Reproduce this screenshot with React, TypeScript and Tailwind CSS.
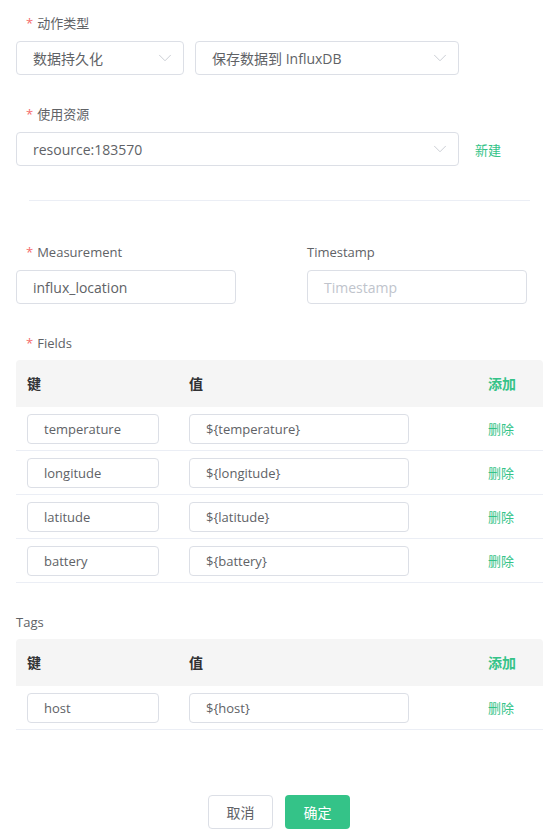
import { ChevronDown } from "lucide-react";

const FONT = { fontFamily: '"Open Sans", "Noto Sans CJK SC", sans-serif' };

const fields = [
  { key: "temperature", value: "${temperature}" },
  { key: "longitude", value: "${longitude}" },
  { key: "latitude", value: "${latitude}" },
  { key: "battery", value: "${battery}" },
];

const tags = [{ key: "host", value: "${host}" }];

function Label({ text, required }: { text: string; required?: boolean }) {
  return (
    <div className="text-[13px] leading-[20px] text-[#606266] pl-[10px]">
      {required && <span className="text-[#f56c6c] mr-[4px]">*</span>}
      {text}
    </div>
  );
}

function Select({ value, className }: { value: string; className: string }) {
  return (
    <div className={`h-[34px] border border-[#dcdfe6] rounded-[4px] flex items-center justify-between pl-[16px] pr-[7px] text-[14px] text-[#606266] ${className}`}>
      <span>{value}</span>
      <ChevronDown className="w-[22px] h-[22px] text-[#c0c4cc]" strokeWidth={0.9} />
    </div>
  );
}

function KvTable({ rows }: { rows: { key: string; value: string }[] }) {
  return (
    <div className="w-[527px]">
      <div className="grid grid-cols-[162px_299px_1fr] h-[47px] items-center bg-[#f5f5f5] rounded-t-[4px] text-[14px] font-bold">
        <div className="pl-[11px] text-[#303133]">键</div>
        <div className="pl-[11px] text-[#303133]">值</div>
        <div className="pl-[11px] text-[#34c388]">添加</div>
      </div>
      {rows.map((r) => (
        <div key={r.key} className="grid grid-cols-[162px_299px_1fr] h-[44px] items-center border-b border-[#ebeef5]">
          <div className="pl-[11px]">
            <div className="w-[132px] h-[30px] border border-[#dcdfe6] rounded-[4px] flex items-center pl-[16px] pt-[2px] text-[13px] text-[#606266]">{r.key}</div>
          </div>
          <div className="pl-[11px]">
            <div className="w-[220px] h-[30px] border border-[#dcdfe6] rounded-[4px] flex items-center pl-[16px] pt-[2px] text-[13px] text-[#606266]">{r.value}</div>
          </div>
          <div className="pl-[11px] pt-[2px] text-[13px] text-[#34c388]">删除</div>
        </div>
      ))}
    </div>
  );
}

export default function App() {
  return (
    <div className="w-[558px] h-[839px] bg-white pl-[16px] overflow-hidden" style={FONT}>
      {/* 动作类型 */}
      <div className="pt-[13px]">
        <Label text="动作类型" required />
        <div className="mt-[8px] flex gap-[11px]">
          <Select value="数据持久化" className="w-[168px]" />
          <Select value="保存数据到 InfluxDB" className="w-[264px]" />
        </div>
      </div>

      {/* 使用资源 */}
      <div className="mt-[29px]">
        <Label text="使用资源" required />
        <div className="mt-[8px] flex items-center">
          <Select value="resource:183570" className="w-[443px]" />
          <span className="ml-[16px] pt-[3px] text-[13px] text-[#34c388]">新建</span>
        </div>
      </div>

      <div className="mt-[34px] ml-[13px] w-[501px] h-px bg-[#ebeef5]" />

      {/* Measurement / Timestamp */}
      <div className="mt-[41px] flex gap-[71px]">
        <div>
          <Label text="Measurement" required />
          <div className="mt-[8px] w-[220px] h-[34px] border border-[#dcdfe6] rounded-[4px] flex items-center pl-[16px] text-[14px] text-[#606266]">influx_location</div>
        </div>
        <div>
          <div className="text-[13px] leading-[20px] text-[#606266]">Timestamp</div>
          <div className="mt-[8px] w-[220px] h-[34px] border border-[#dcdfe6] rounded-[4px] flex items-center pl-[16px] text-[14px] text-[#c0c4cc]">Timestamp</div>
        </div>
      </div>

      {/* Fields */}
      <div className="mt-[29px]">
        <Label text="Fields" required />
        <div className="mt-[7px]">
          <KvTable rows={fields} />
        </div>
      </div>

      {/* Tags */}
      <div className="mt-[29px]">
        <div className="text-[13px] leading-[20px] text-[#606266]">Tags</div>
        <div className="mt-[7px]">
          <KvTable rows={tags} />
        </div>
      </div>

      {/* Footer */}
      <div className="mt-[65px] flex justify-center gap-[12px] pr-[16px]">
        <button className="w-[65px] h-[34px] border border-[#dcdfe6] rounded-[4px] text-[14px] text-[#606266] bg-white">取消</button>
        <button className="w-[65px] h-[34px] rounded-[4px] text-[14px] text-white bg-[#34c388]">确定</button>
      </div>
    </div>
  );
}
